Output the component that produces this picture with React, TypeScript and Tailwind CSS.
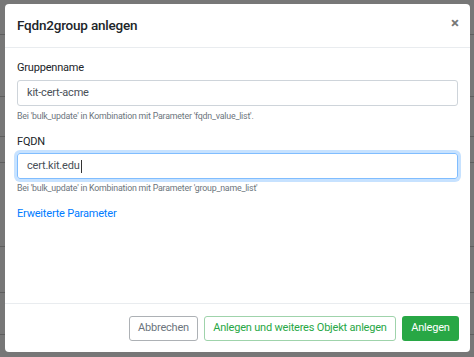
import React from 'react';

const rows = [35, 62, 40, 26, 84, 46, 42];

export default function App() {
  return (
    <div
      className="relative w-full h-[357px] overflow-hidden bg-[#777777]"
      style={{ fontFamily: 'Roboto, "Liberation Sans", sans-serif' }}
    >
      {/* page behind the backdrop */}
      <div className="flex flex-col">
        {rows.map((h, i) => (
          <div key={i} className="border-b border-[#5e5e5e]" style={{ height: h }} />
        ))}
      </div>

      {/* Modal */}
      <div className="absolute left-[5px] top-[4px] w-[465px] h-[348px] bg-white rounded-[4px] flex flex-col text-[#212529]">
        <div className="h-[44px] flex items-center justify-between px-[12px] border-b border-[#e9ecef]">
          <h5 className="text-[13.5px] tracking-[-0.2px] font-medium leading-none pt-[1px]">Fqdn2group anlegen</h5>
          <span className="text-[15px] font-bold text-[#777] leading-none mr-[-1px] mt-[-4px]">×</span>
        </div>

        <div className="flex-1 px-[12px] pt-[11px]">
          <label className="block text-[11px] tracking-[-0.2px] leading-[18px]">Gruppenname</label>
          <div className="mt-[3px] h-[26px] border border-[#ced4da] rounded-[3px] flex items-center px-[9px] text-[11px] tracking-[-0.2px] text-[#495057]">
            kit-cert-acme
          </div>
          <p className="mt-[4px] text-[8.8px] tracking-[-0.2px] leading-[12px] text-[#6c757d]">
            Bei 'bulk_update' in Kombination mit Parameter 'fqdn_value_list'.
          </p>

          <label className="block mt-[11px] text-[11px] tracking-[-0.2px] leading-[18px]">FQDN</label>
          <div className="mt-[2px] h-[26px] border border-[#80bdff] rounded-[3px] flex items-center px-[9px] text-[11px] tracking-[-0.2px] text-[#495057] shadow-[0_0_0_3px_rgba(0,123,255,0.22)]">
            cert.kit.edu
            <span className="inline-block w-px h-[13px] bg-[#333] ml-px" />
          </div>
          <p className="mt-[3px] text-[8.8px] tracking-[-0.2px] leading-[12px] text-[#6c757d]">
            Bei 'bulk_update' in Kombination mit Parameter 'group_name_list'
          </p>

          <a className="block mt-[11px] text-[11px] tracking-[-0.2px] leading-[18px] text-[#007bff]">Erweiterte Parameter</a>
        </div>

        <div className="h-[49px] border-t border-[#e9ecef] flex items-start justify-end gap-[6px] pt-[12px] pr-[11px]">
          <button className="h-[25px] w-[69px] border border-[#adb1b5] rounded-[3px] text-[11px] tracking-[-0.2px] text-[#6c757d] whitespace-nowrap">
            Abbrechen
          </button>
          <button className="h-[25px] w-[192px] border border-[#9fd3ab] rounded-[3px] text-[11px] tracking-[-0.2px] text-[#28a745] whitespace-nowrap">
            Anlegen und weiteres Objekt anlegen
          </button>
          <button className="h-[25px] w-[57px] rounded-[3px] bg-[#28a745] text-[11px] tracking-[-0.2px] text-white whitespace-nowrap">
            Anlegen
          </button>
        </div>
      </div>
    </div>
  );
}
